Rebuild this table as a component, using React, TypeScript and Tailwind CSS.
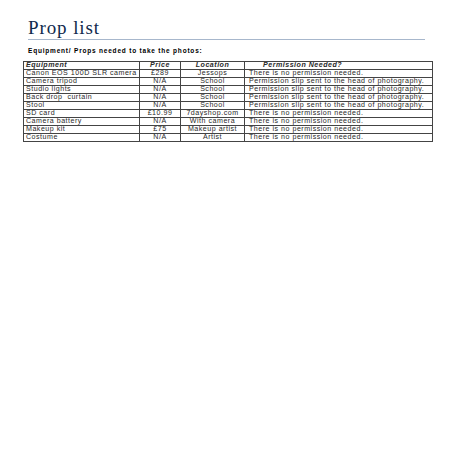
const rows = [
  ["Canon EOS 100D SLR camera", "£289", "Jessops", "There is no permission needed."],
  ["Camera tripod", "N/A", "School", "Permission slip sent to the head of photography."],
  ["Studio lights", "N/A", "School", "Permission slip sent to the head of photography."],
  ["Back drop  curtain", "N/A", "School", "Permission slip sent to the head of photography."],
  ["Stool", "N/A", "School", "Permission slip sent to the head of photography."],
  ["SD card", "£10.99", "7dayshop.com", "There is no permission needed."],
  ["Camera battery", "N/A", "With camera", "There is no permission needed."],
  ["Makeup kit", "£75", "Makeup artist", "There is no permission needed."],
  ["Costume", "N/A", "Artist", "There is no permission needed."],
];

export default function App() {
  return (
    <div className="w-[453px] h-[453px] bg-white pt-[18px] px-[23px] font-['Liberation_Sans',sans-serif] text-[#2a2a2a]">
      <div className="mx-[5px] border-b border-[#a7b7cc] pb-[2px]">
        <h1 className="font-['Liberation_Serif',serif] text-[19px] leading-[19px] tracking-[0.9px] text-[#0f2a4d]">
          Prop list
        </h1>
      </div>
      <p className="mx-[5px] mt-[7px] text-[6.5px] leading-[8px] font-bold tracking-[0.8px] text-black">
        Equipment/ Props needed to take the photos:
      </p>
      <table className="mt-[6px] w-[410px] border-collapse text-[7.1px] leading-[7px] tracking-[0.5px]">
        <colgroup>
          <col className="w-[116px]" />
          <col className="w-[41px]" />
          <col className="w-[64px]" />
          <col />
        </colgroup>
        <thead>
          <tr className="h-[8px] font-bold italic">
            <td className="border border-[#444] px-[2px] py-0">Equipment</td>
            <td className="border border-[#444] px-[2px] py-0 text-center">Price</td>
            <td className="border border-[#444] px-[2px] py-0 text-center">Location</td>
            <td className="border border-[#444] pl-[18px] py-0">Permission Needed?</td>
          </tr>
        </thead>
        <tbody>
          {rows.map((r) => (
            <tr key={r[0]} className="h-[8px]">
              <td className="border border-[#444] px-[2px] py-0 whitespace-pre">{r[0]}</td>
              <td className="border border-[#444] px-[2px] py-0 text-center">{r[1]}</td>
              <td className="border border-[#444] px-[2px] py-0 text-center whitespace-nowrap">{r[2]}</td>
              <td className="border border-[#444] px-[4px] py-0 whitespace-nowrap">{r[3]}</td>
            </tr>
          ))}
        </tbody>
      </table>
    </div>
  );
}
